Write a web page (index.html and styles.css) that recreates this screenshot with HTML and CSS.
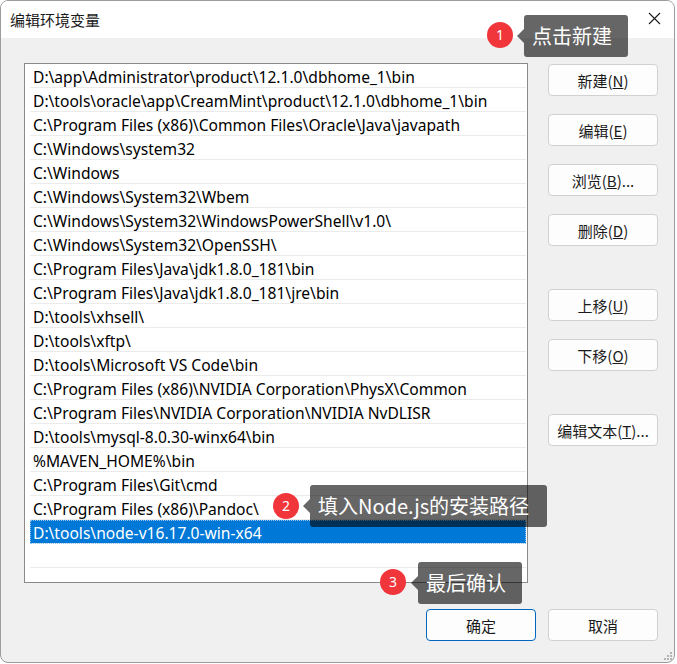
FILE: index.html
```html
<!DOCTYPE html>
<html lang="zh-CN">
<head>
    <meta charset="UTF-8">
    <title>编辑环境变量</title>
    <link rel="stylesheet" href="styles.css">
</head>
<body>
    <div class="window">
        <div class="titlebar">
            <span class="title">编辑环境变量</span>
            <svg class="close" width="13" height="13" viewBox="0 0 13 13">
                <path d="M1 1L12 12M12 1L1 12" stroke="#1a1a1a" stroke-width="1.1" fill="none"/>
            </svg>
        </div>

        <div class="content">
            <ul class="list">
                <li>D:\app\Administrator\product\12.1.0\dbhome_1\bin</li>
                <li>D:\tools\oracle\app\CreamMint\product\12.1.0\dbhome_1\bin</li>
                <li>C:\Program Files (x86)\Common Files\Oracle\Java\javapath</li>
                <li>C:\Windows\system32</li>
                <li>C:\Windows</li>
                <li>C:\Windows\System32\Wbem</li>
                <li>C:\Windows\System32\WindowsPowerShell\v1.0\</li>
                <li>C:\Windows\System32\OpenSSH\</li>
                <li>C:\Program Files\Java\jdk1.8.0_181\bin</li>
                <li>C:\Program Files\Java\jdk1.8.0_181\jre\bin</li>
                <li>D:\tools\xhsell\</li>
                <li>D:\tools\xftp\</li>
                <li>D:\tools\Microsoft VS Code\bin</li>
                <li>C:\Program Files (x86)\NVIDIA Corporation\PhysX\Common</li>
                <li>C:\Program Files\NVIDIA Corporation\NVIDIA NvDLISR</li>
                <li>D:\tools\mysql-8.0.30-winx64\bin</li>
                <li>%MAVEN_HOME%\bin</li>
                <li>C:\Program Files\Git\cmd</li>
                <li>C:\Program Files (x86)\Pandoc\</li>
                <li class="selected">D:\tools\node-v16.17.0-win-x64</li>
                <li></li>
            </ul>

            <div class="actions">
                <button class="btn">新建(<u>N</u>)</button>
                <button class="btn">编辑(<u>E</u>)</button>
                <button class="btn">浏览(<u>B</u>)...</button>
                <button class="btn">删除(<u>D</u>)</button>
                <button class="btn spaced">上移(<u>U</u>)</button>
                <button class="btn">下移(<u>O</u>)</button>
                <button class="btn spaced">编辑文本(<u>T</u>)...</button>
            </div>
        </div>

        <div class="footer">
            <button class="btn primary">确定</button>
            <button class="btn">取消</button>
        </div>

        <!-- step markers -->
        <span class="badge step1">1</span>
        <div class="tip tip1">点击新建</div>
        <span class="badge step2">2</span>
        <div class="tip tip2">填入Node.js的安装路径</div>
        <span class="badge step3">3</span>
        <div class="tip tip3">最后确认</div>

        <svg class="grip" width="10" height="10" viewBox="0 0 10 10">
            <rect x="7" y="1" width="2" height="2" fill="#b4b4b4"/>
            <rect x="4" y="4" width="2" height="2" fill="#b4b4b4"/>
            <rect x="7" y="4" width="2" height="2" fill="#b4b4b4"/>
            <rect x="1" y="7" width="2" height="2" fill="#b4b4b4"/>
            <rect x="4" y="7" width="2" height="2" fill="#b4b4b4"/>
            <rect x="7" y="7" width="2" height="2" fill="#b4b4b4"/>
        </svg>
    </div>
</body>
</html>
```

FILE: styles.css
```css
body {
    margin: 0;
    background: #ffffff;
    font-family: "Noto Sans", "Noto Sans CJK SC", sans-serif;
}

.window {
    position: relative;
    box-sizing: border-box;
    width: 675px;
    height: 663px;
    border: 1px solid #9c9c9c;
    border-radius: 8px;
    overflow: hidden;
    background: #f0f0f0;
    display: flex;
    flex-direction: column;
}

.titlebar {
    height: 37px;
    background: #ffffff;
    display: flex;
    align-items: center;
    justify-content: space-between;
    padding: 0 13px 0 9px;
    flex-shrink: 0;
}

.title {
    font-family: "Noto Sans CJK SC", sans-serif;
    font-size: 15px;
    color: #1a1a1a;
    margin-top: -1px;
}

.close {
    margin-top: -2px;
}

.content {
    display: flex;
    padding: 25px 0 0 23px;
}

.list {
    box-sizing: border-box;
    width: 504px;
    height: 520px;
    margin: 0;
    padding: 0 1px 0 5px;
    list-style: none;
    background: #ffffff;
    border: 1px solid #8a8a8a;
    overflow: hidden;
}

.list li {
    box-sizing: border-box;
    height: 24px;
    padding: 4px 0 0 3px;
    line-height: 19px;
    border-bottom: 1px solid #ebebeb;
    font-size: 15.6px;
    color: #000000;
    white-space: nowrap;
}

.list li.selected {
    background: #0078d7;
    color: #ffffff;
    outline: 1px dotted #9bc6ee;
    outline-offset: -1px;
}

.actions {
    display: flex;
    flex-direction: column;
    margin-left: 20px;
    padding-top: 1px;
}

.btn {
    box-sizing: border-box;
    width: 110px;
    height: 32px;
    padding: 0;
    border: 1px solid #d1d1d1;
    border-radius: 4px;
    background: #fdfdfd;
    font-family: "Noto Sans CJK SC", sans-serif;
    font-size: 15px;
    color: #1a1a1a;
}

.actions .btn + .btn {
    margin-top: 18px;
}

.actions .btn.spaced {
    margin-top: 43px;
}

.footer {
    display: flex;
    justify-content: flex-end;
    gap: 12px;
    padding: 26px 16px 0 0;
}

.btn.primary {
    border-color: #0067c0;
}

.badge {
    position: absolute;
    width: 26px;
    height: 26px;
    border-radius: 50%;
    background: #f0353b;
    color: #ffffff;
    font-family: "Noto Sans", sans-serif;
    font-size: 14px;
    line-height: 26px;
    text-align: center;
}

.step1 { left: 486px; top: 21px; }
.step2 { left: 272px; top: 492px; }
.step3 { left: 379px; top: 568px; }

.tip {
    position: absolute;
    box-sizing: border-box;
    height: 42px;
    padding-left: 8px;
    border-radius: 3px;
    background: rgba(0, 0, 0, 0.6);
    color: #ffffff;
    font-family: "Noto Sans CJK SC", sans-serif;
    font-size: 20px;
    line-height: 42px;
    white-space: nowrap;
}

.tip::before {
    content: "";
    position: absolute;
    left: -7px;
    top: 14px;
    border-top: 7px solid transparent;
    border-bottom: 7px solid transparent;
    border-right: 7px solid rgba(0, 0, 0, 0.6);
}

.tip1 { left: 523px; top: 14px; width: 104px; }
.tip2 { left: 309px; top: 484px; width: 237px; }
.tip3 { left: 417px; top: 561px; width: 104px; }

.grip {
    position: absolute;
    right: 1px;
    bottom: 1px;
}
```
